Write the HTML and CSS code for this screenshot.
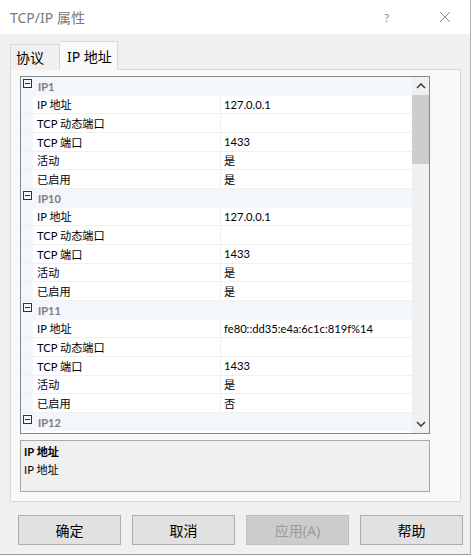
FILE: index.html
```html
<!DOCTYPE html>
<html lang="zh-CN">
<head>
<meta charset="utf-8">
<title>TCP/IP 属性</title>
<link rel="stylesheet" href="styles.css">
</head>
<body>
<div class="window">
  <div class="titlebar">
    <span class="title">TCP/IP 属性</span>
    <span class="help">?</span>
    <span class="close">
      <svg width="12" height="12" viewBox="0 0 12 12"><path d="M1 1 L11 11 M11 1 L1 11" stroke="#8a8a8a" stroke-width="1" fill="none"/></svg>
    </span>
  </div>
  <div class="client">
    <div class="tabs">
      <div class="tab">协议</div>
      <div class="tab selected">IP 地址</div>
    </div>
    <div class="panel">
      <div class="grid">
        <div class="rows">
          <div class="cat"><span class="box"></span><span class="catname">IP1</span></div>
          <div class="prop"><span class="gut"></span><span class="name">IP 地址</span><span class="val">127.0.0.1</span></div>
          <div class="prop"><span class="gut"></span><span class="name">TCP 动态端口</span><span class="val"></span></div>
          <div class="prop"><span class="gut"></span><span class="name">TCP 端口</span><span class="val">1433</span></div>
          <div class="prop"><span class="gut"></span><span class="name">活动</span><span class="val">是</span></div>
          <div class="prop"><span class="gut"></span><span class="name">已启用</span><span class="val">是</span></div>
          <div class="cat"><span class="box"></span><span class="catname">IP10</span></div>
          <div class="prop"><span class="gut"></span><span class="name">IP 地址</span><span class="val">127.0.0.1</span></div>
          <div class="prop"><span class="gut"></span><span class="name">TCP 动态端口</span><span class="val"></span></div>
          <div class="prop"><span class="gut"></span><span class="name">TCP 端口</span><span class="val">1433</span></div>
          <div class="prop"><span class="gut"></span><span class="name">活动</span><span class="val">是</span></div>
          <div class="prop"><span class="gut"></span><span class="name">已启用</span><span class="val">是</span></div>
          <div class="cat"><span class="box"></span><span class="catname">IP11</span></div>
          <div class="prop"><span class="gut"></span><span class="name">IP 地址</span><span class="val">fe80::dd35:e4a:6c1c:819f%14</span></div>
          <div class="prop"><span class="gut"></span><span class="name">TCP 动态端口</span><span class="val"></span></div>
          <div class="prop"><span class="gut"></span><span class="name">TCP 端口</span><span class="val">1433</span></div>
          <div class="prop"><span class="gut"></span><span class="name">活动</span><span class="val">是</span></div>
          <div class="prop"><span class="gut"></span><span class="name">已启用</span><span class="val">否</span></div>
          <div class="cat"><span class="box"></span><span class="catname">IP12</span></div>
        </div>
        <div class="scrollbar">
          <div class="arrow">
            <svg width="10" height="6" viewBox="0 0 10 6"><path d="M1 5 L5 1 L9 5" stroke="#404040" stroke-width="1.6" fill="none"/></svg>
          </div>
          <div class="track"><div class="thumb"></div></div>
          <div class="arrow">
            <svg width="10" height="6" viewBox="0 0 10 6"><path d="M1 1 L5 5 L9 1" stroke="#404040" stroke-width="1.6" fill="none"/></svg>
          </div>
        </div>
      </div>
      <div class="desc">
        <div class="desc-title">IP 地址</div>
        <div class="desc-text">IP 地址</div>
      </div>
    </div>
    <div class="buttons">
      <button class="btn">确定</button>
      <button class="btn">取消</button>
      <button class="btn disabled">应用(A)</button>
      <button class="btn">帮助</button>
    </div>
  </div>
</div>
</body>
</html>
```
FILE: styles.css
```css
html, body {
  margin: 0;
  padding: 0;
  background: #ffffff;
}
body {
  width: 474px;
  height: 557px;
  overflow: hidden;
  font-family: "Lato", "Noto Sans CJK SC", sans-serif;
  font-size: 11.2px;
  color: #000;
}
.window {
  width: 470px;
  height: 554px;
  border-right: 1px solid #b4b4b4;
  border-bottom: 1px solid #9a9a9a;
  display: flex;
  flex-direction: column;
}
.titlebar {
  height: 34px;
  flex: none;
  background: #ffffff;
  display: flex;
  align-items: center;
}
.title {
  margin-left: 10px;
  font-family: "Noto Sans", "Noto Sans CJK SC", sans-serif;
  font-size: 14px;
  color: #7a7a7a;
  flex: 1;
}
.help {
  font-size: 12px;
  color: #8a8a8a;
  width: 12px;
  margin-right: 43px;
}
.close {
  display: flex;
  margin-right: 19px;
}
.client {
  flex: 1;
  background: #f0f0f0;
  display: flex;
  flex-direction: column;
}
.tabs {
  display: flex;
  align-items: flex-end;
  height: 36px;
  padding-left: 10px;
  margin-bottom: -1px;
  position: relative;
  z-index: 1;
}
.tab {
  height: 26px;
  line-height: 26px;
  padding-left: 5px;
  font-family: "Noto Sans", "Noto Sans CJK SC", sans-serif;
  font-size: 14px;
  white-space: nowrap;
  border: 1px solid #d9d9d9;
  border-bottom: none;
  background: #f0f0f0;
  box-sizing: border-box;
  width: 50px;
}
.tab.selected {
  height: 29px;
  line-height: 29px;
  width: 58px;
  background: #f9f9f9;
  border-left: none;
  padding-left: 7px;
}
.panel {
  margin-left: 10px;
  width: 451px;
  height: 433px;
  box-sizing: border-box;
  border: 1px solid #d9d9d9;
  background: #f9f9f9;
  padding: 6px 0 0 9px;
  display: flex;
  flex-direction: column;
}
.grid {
  width: 410px;
  height: 358px;
  box-sizing: border-box;
  border: 1px solid #828790;
  display: flex;
  background: #ffffff;
}
.rows {
  flex: 1;
  display: flex;
  flex-direction: column;
  overflow: hidden;
}
.cat, .prop {
  height: 18.67px;
  flex: none;
  display: flex;
  align-items: center;
  box-sizing: border-box;
  white-space: nowrap;
}
.cat {
  background: #f3f6fb;
}
.prop {
  border-bottom: 1px solid #f0f0f0;
}
.box {
  width: 7px;
  height: 7px;
  border: 1px solid #333;
  margin-left: 2px;
  position: relative;
  flex: none;
  margin-top: -5px;
}
.box::after {
  content: "";
  position: absolute;
  left: 1px;
  right: 1px;
  top: 3px;
  height: 1px;
  background: #333;
}
.catname {
  font-weight: bold;
  color: #7b7b7b;
  margin-left: 6px;
  font-size: 11px;
}
.gut {
  width: 12px;
  align-self: stretch;
  background: #f3f6fb;
  flex: none;
}
.name {
  width: 188px;
  padding-left: 4px;
  box-sizing: border-box;
  align-self: stretch;
  display: flex;
  align-items: center;
  border-right: 1px solid #f0f0f0;
  flex: none;
}
.val {
  padding-left: 3px;
}
.scrollbar {
  width: 17px;
  flex: none;
  background: #f0f0f0;
  display: flex;
  flex-direction: column;
}
.arrow {
  height: 18px;
  display: flex;
  align-items: center;
  justify-content: center;
  flex: none;
}
.track {
  flex: 1;
}
.thumb {
  height: 69px;
  background: #cdcdcd;
}
.desc {
  margin-top: 6px;
  width: 410px;
  height: 52px;
  box-sizing: border-box;
  border: 1px solid #a9a9a9;
  background: #f0f0f0;
  padding: 2px 0 0 3px;
}
.desc-title {
  font-weight: bold;
  height: 18px;
  line-height: 18px;
}
.desc-text {
  height: 18px;
  line-height: 18px;
}
.buttons {
  display: flex;
  gap: 11px;
  padding-left: 18px;
  margin-top: 13px;
}
.btn {
  width: 103px;
  height: 30px;
  box-sizing: border-box;
  border: 1px solid #adadad;
  background: #e1e1e1;
  font-family: "Noto Sans", "Noto Sans CJK SC", sans-serif;
  font-size: 14px;
  color: #000;
  padding: 0;
}
.btn.disabled {
  background: #cccccc;
  border-color: #bfbfbf;
  color: #9a9a9a;
}
```
